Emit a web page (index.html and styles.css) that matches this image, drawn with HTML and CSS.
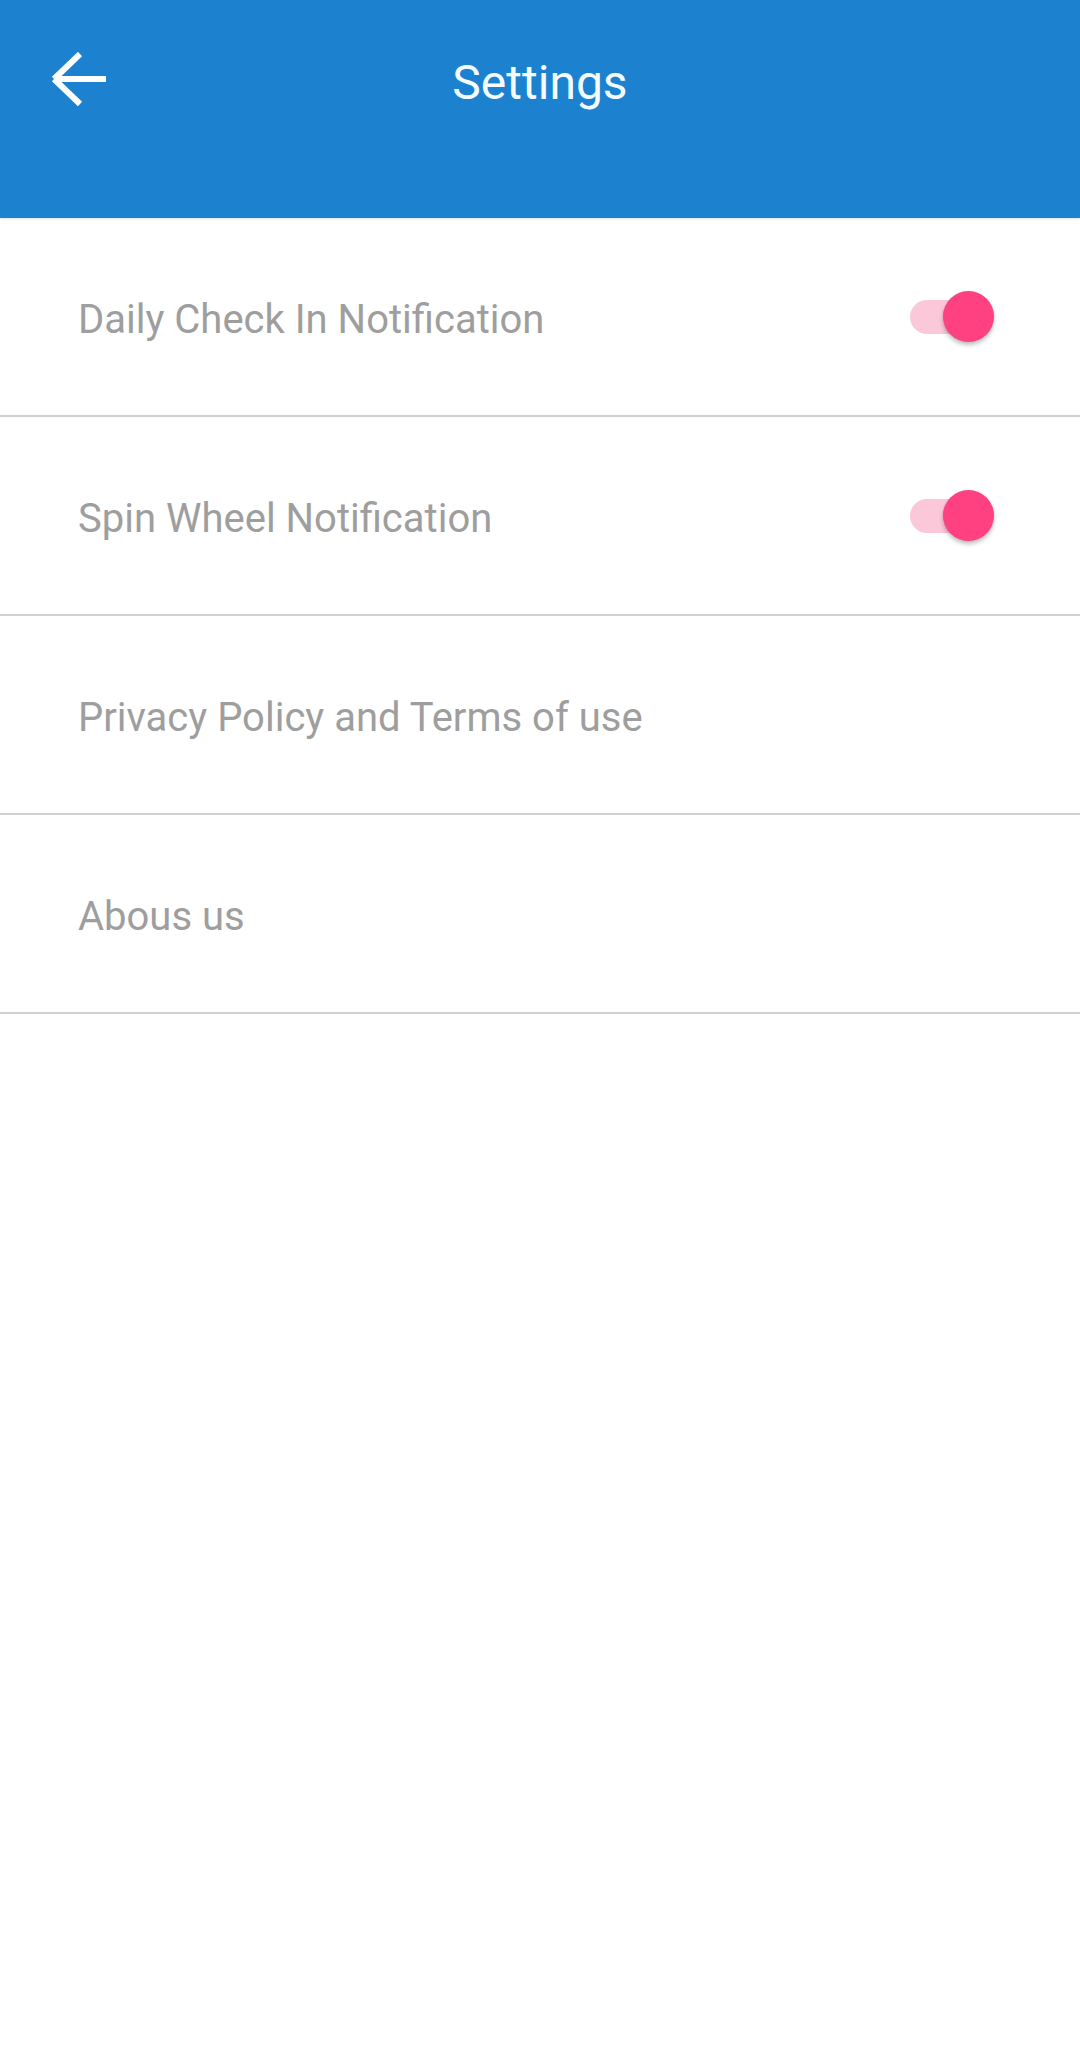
FILE: index.html
```html
<!DOCTYPE html>
<html>
<head>
<meta charset="utf-8">
<link rel="stylesheet" href="styles.css">
</head>
<body>
<div class="screen">
  <header class="toolbar">
    <div class="toolbar-row">
      <svg class="back" width="60" height="56" viewBox="0 0 60 56">
        <path d="M5 27 H57 M5 27 L31 2 M5 27 L31 52" fill="none" stroke="#ffffff" stroke-width="6" stroke-linecap="butt" stroke-linejoin="miter"/>
      </svg>
      <h1 class="title">Settings</h1>
    </div>
  </header>
  <ul class="list">
    <li class="item">
      <span class="label">Daily Check In Notification</span>
      <span class="switch on"><span class="track"></span><span class="thumb"></span></span>
    </li>
    <li class="item">
      <span class="label">Spin Wheel Notification</span>
      <span class="switch on"><span class="track"></span><span class="thumb"></span></span>
    </li>
    <li class="item">
      <span class="label">Privacy Policy and Terms of use</span>
    </li>
    <li class="item">
      <span class="label">Abous us</span>
    </li>
  </ul>
</div>
</body>
</html>
```
FILE: styles.css
```css
html, body {
  margin: 0;
  padding: 0;
  background: #ffffff;
}
body {
  font-family: Roboto, "Noto Sans", "Liberation Sans", sans-serif;
  width: 1080px;
  height: 2070px;
  overflow: hidden;
}
.screen {
  width: 1080px;
  height: 2070px;
  background: #ffffff;
}
.toolbar {
  height: 218px;
  background: #1c82d0;
  box-shadow: 0 1px 2px rgba(0, 0, 0, 0.12);
  position: relative;
}
.toolbar-row {
  height: 160px;
  display: flex;
  align-items: center;
  justify-content: center;
  position: relative;
}
.back {
  position: absolute;
  left: 49px;
  top: 52px;
}
.title {
  margin: 0;
  font-weight: 400;
  font-size: 48px;
  color: #f4fcff;
  letter-spacing: 0;
  line-height: 1;
  margin-top: 6px;
}
.list {
  list-style: none;
  margin: 0;
  padding: 0;
}
.item {
  height: 197px;
  border-bottom: 2px solid #d0d0d0;
  display: flex;
  align-items: center;
  justify-content: space-between;
  padding: 0 86px 0 78px;
}
.label {
  font-size: 40px;
  color: #9e9e9e;
  line-height: 1;
  padding-top: 6px;
}
.switch {
  position: relative;
  width: 84px;
  height: 52px;
  display: block;
}
.track {
  position: absolute;
  left: 0;
  top: 9px;
  width: 70px;
  height: 34px;
  border-radius: 17px;
  background: #fbc8d9;
}
.thumb {
  position: absolute;
  right: 0;
  top: 0;
  width: 51px;
  height: 51px;
  border-radius: 50%;
  background: #ff4081;
  box-shadow: 0 3px 4px rgba(0, 0, 0, 0.25), 0 0 1px rgba(0, 0, 0, 0.12);
}
```
